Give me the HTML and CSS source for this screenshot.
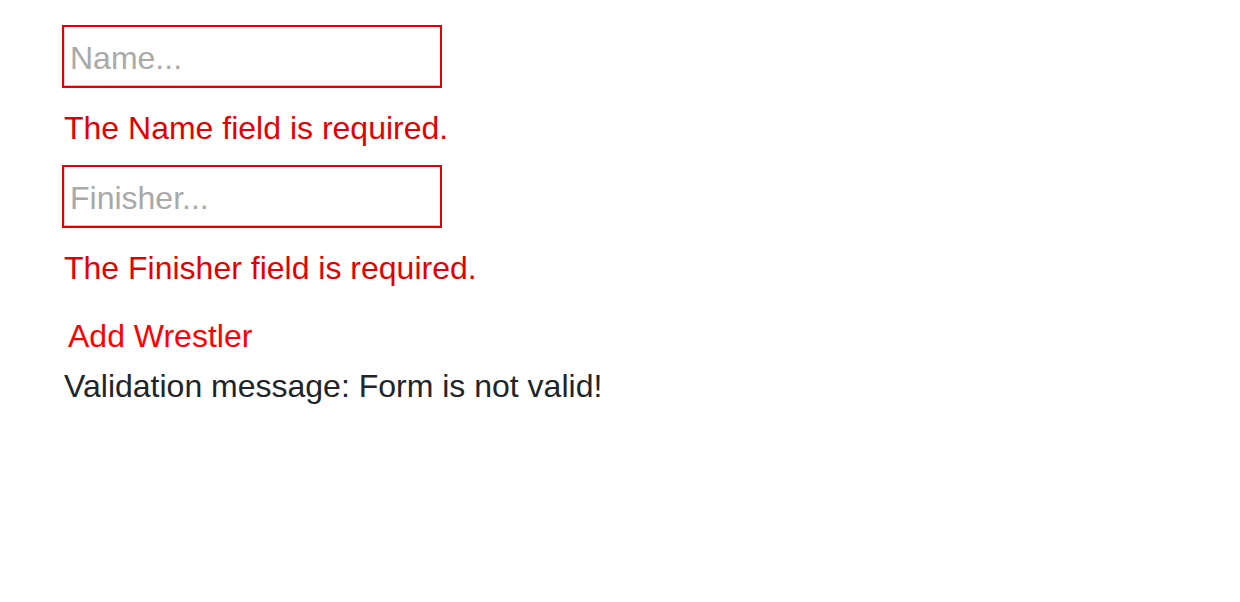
FILE: index.html
```html
<!DOCTYPE html>
<html lang="en">
<head>
<meta charset="utf-8">
<title>Add Wrestler</title>
<link rel="stylesheet" href="styles.css">
</head>
<body>
<main class="page">
  <form class="wrestler-form" novalidate>
    <input class="field invalid" type="text" placeholder="Name...">
    <div class="validation-message">The Name field is required.</div>
    <input class="field invalid" type="text" placeholder="Finisher...">
    <div class="validation-message">The Finisher field is required.</div>
    <button class="add-btn" type="button">Add Wrestler</button>
  </form>
  <p class="status">Validation message: Form is not valid!</p>
</main>
</body>
</html>
```

FILE: styles.css
```css
html, body {
  margin: 0;
  padding: 0;
  background: #ffffff;
}

body {
  font-family: "Liberation Sans", Arial, Helvetica, sans-serif;
  font-size: 32px;
  color: #212529;
}

.page {
  padding: 27px 0 0 64px;
}

.wrestler-form {
  display: flex;
  flex-direction: column;
  align-items: flex-start;
}

.field {
  box-sizing: border-box;
  width: 376px;
  height: 59px;
  margin: 0;
  padding: 4px 5px 0;
  font-family: inherit;
  font-size: 32px;
  color: #212529;
  background: #ffffff;
  border: 1px solid #ffffff;
  border-bottom-color: #c4c4c4;
  border-left-color: #dadada;
  border-radius: 0;
}

.field::placeholder {
  color: #a9a9a9;
}

.invalid {
  outline: 2px solid #e50000;
  outline-offset: 0;
}

.validation-message {
  color: #e50000;
  line-height: 48px;
  margin: 18px 0 15px;
}

.add-btn {
  margin-top: 5px;
  padding: 0 4px;
  border: none;
  background: none;
  color: #ff0000;
  font-family: inherit;
  font-size: 32px;
  line-height: 48px;
  cursor: pointer;
}

.status {
  margin: 2px 0 0;
  line-height: 48px;
}
```
